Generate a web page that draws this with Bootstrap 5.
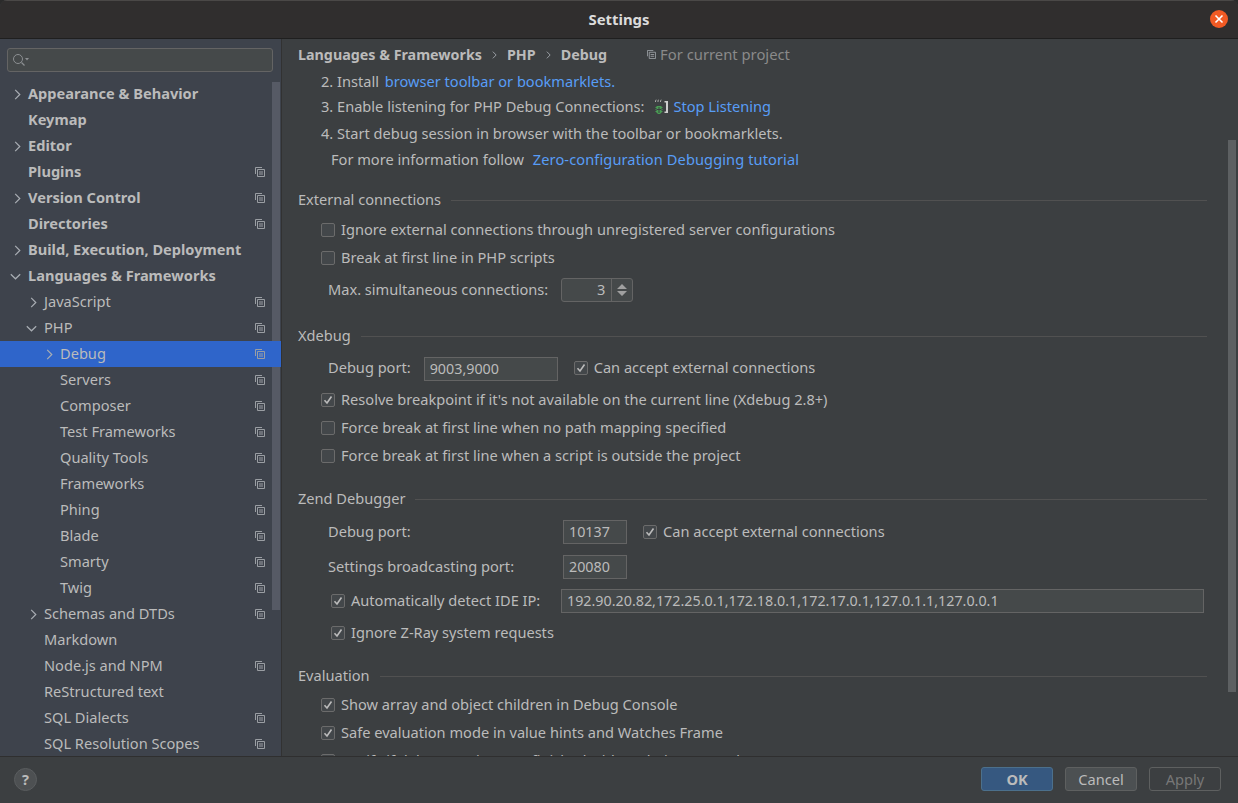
<!DOCTYPE html>
<html lang="en"><head><meta charset="utf-8"><title>Settings</title>
<link href="https://cdn.jsdelivr.net/npm/bootstrap@5.3.0/dist/css/bootstrap.min.css" rel="stylesheet">
<style>
html,body{height:100%}
body{background:#2b2b2b;font-family:"Noto Sans","Liberation Sans",sans-serif;font-size:14.6px;color:#bbb;overflow:hidden}
.dlg{height:803px;width:1238px;background:#3c3f41;border-radius:7px 7px 0 0;overflow:hidden;position:relative}
.titlebar{height:39px;background:#302e2e;border-top:1px solid #4a4847;border-bottom:1px solid #1f1f1f;position:relative}
.titlebar b{font-size:14.9px;color:#dcdcdc;font-weight:700;padding-bottom:1px}
.closer{position:absolute;right:10px;top:9px;width:18px;height:18px;border-radius:50%;background:#f15a24;border:0;padding:0}
.main{height:717px;overflow:hidden}
.side{width:282px;background:#3e434c;border-right:1px solid #323232;position:relative;flex:none}
.searchbox{margin:9px 8px 9px 7px;height:24px;background:#45494a;border:1px solid #646464;border-radius:3px;padding-left:4px}
.treelist{border-radius:0;--bs-list-group-bg:transparent;--bs-list-group-border-width:0}
.treelist .list-group-item{height:26px;padding:0 16px 0 0;color:#bbb;background:transparent;font-size:14.6px;white-space:nowrap;display:flex;align-items:center}
.treelist .list-group-item.active{background:#2f65ca;color:#bbb}
.lv0{font-weight:700}
.arrow{width:28px;flex:none;display:flex;justify-content:flex-end;padding-right:7px}
.lv1 .arrow{width:44px}
.lv2 .arrow{width:60px}
.sb1{position:absolute;left:272px;top:43px;width:8px;height:528px;background:rgba(120,125,135,.42)}
.sb2{position:absolute;right:2px;top:140px;width:8px;height:552px;background:#5d6062}
.content{flex:1;min-width:0;padding-left:16px;padding-right:31px;overflow:hidden}
.crumbs{height:31px;white-space:nowrap}
.crumbs b{font-weight:700;font-size:14.3px}
.crumbs .sep{margin:0 10px}
.scope{color:#8a8a8a;margin-left:40px;font-size:14.8px}
.ln{height:24px;display:flex;align-items:center;white-space:nowrap}
.ind1{padding-left:23px}.ind2{padding-left:30px}.ind3{padding-left:33px}
.lnk{color:#589df6;text-decoration:none}
.lnk-a{margin-left:2px}
.lnk-b{margin-left:5px;letter-spacing:.1px}
.ttl{display:flex;align-items:center;gap:10px}
.ttl::after{content:"";flex:1;height:1px;background:#515151}
.form-check-input.tick{width:14px;height:14px;margin:0 6px 0 0;background-color:#43474a;border:1px solid #6b6b6b;border-radius:2px;flex:none;float:none}
.form-check-input.tick.ms-3{margin-left:16px}
.form-check-input.tick:checked{background-color:#43474a;border-color:#6b6b6b;background-size:12px;background-image:url("data:image/svg+xml,%3csvg xmlns='http://www.w3.org/2000/svg' viewBox='0 0 12 12'%3e%3cpath fill='none' stroke='%23bbb' stroke-width='1.6' d='M2.5 6.3 5 9l4.5-6.5'/%3e%3c/svg%3e")}
.form-control.fld{height:24px;padding:0 5px 2px;background:#45494a;border:1px solid #646464;border-radius:0;color:#bbb;font-size:14.3px}
.spin{width:72px;height:24px;border:1px solid #646464;border-radius:3px;background:#45494a;margin-left:13px}
.spin span{flex:1;text-align:right;padding:0 6px 2px 0;border-right:1px solid #646464;line-height:20px}
.g1{margin-top:1px}.g2{margin-top:2px}.g3{margin-top:3px}.g4{margin-top:4px}.g5{margin-top:5px}.g6{margin-top:6px}.g8{margin-top:8px}.g9{margin-top:9px}.g10{margin-top:10px}.g11{margin-top:11px}.g16{margin-top:16px}.g19{margin-top:19px}.g22{margin-top:22px}
.footbar{height:47px;border-top:1px solid #2f2f2f;background:#3c3f41;padding:0 17px 2px 14px}
.helpbtn{width:23px;height:23px;border-radius:50%;background:#4d5052;border:1px solid #5a5d5f;color:#bbb;font-weight:700;font-size:14.6px;padding:0;line-height:20px}
.btn.dbtn{width:72px;height:24px;padding:0;font-size:14.6px;border-radius:3px;line-height:21px;color:#bbb;background:#4c5052;border:1px solid #5e6060}
.btn.dbtn.pri{background:#365880;border-color:#4c708c;font-weight:700}
.btn.dbtn.off{background:transparent;border-color:#5e6060;color:#777;opacity:1}
.port1{width:134px;flex:none;margin-left:13px}
.form-control.fld.port1{margin-top:2px}
.port2{width:64px;flex:none}
.lab1{width:235px;flex:none}
.lab2{width:230px;flex:none}
.ipf{margin-right:3px}
.for-more{margin-left:10px}
.bugi{margin:0 4px 0 10px;flex:none}
</style></head>
<body>
<svg width="0" height="0" class="d-block position-absolute"><defs>
<symbol id="proj" viewBox="0 0 10 10"><path fill="none" stroke="#9a9ea3" d="M.5 7V.5H7M2.5 2.5h7v7h-7zM4 5h4M4 7h4"/></symbol>
<symbol id="arr" viewBox="0 0 7 11"><path fill="none" stroke="#a8adb3" stroke-width="1.2" d="M1.2.8 5.8 5.5 1.2 10.2"/></symbol>
<symbol id="arrd" viewBox="0 0 11 7"><path fill="none" stroke="#a8adb3" stroke-width="1.2" d="M.8 1.2 5.5 5.8l4.7-4.6"/></symbol>
</defs></svg>
<div class="dlg d-flex flex-column">
 <div class="titlebar d-flex align-items-center justify-content-center"><b>Settings</b>
  <button class="closer d-flex align-items-center justify-content-center" aria-label="Close"><svg width="10" height="10" viewBox="0 0 10 10"><path stroke="#fff" stroke-width="1.6" d="m1.5 1.5 7 7m0-7-7 7"/></svg></button></div>
 <div class="main d-flex">
  <div class="side">
   <div class="searchbox d-flex align-items-center"><svg width="18" height="14" viewBox="0 0 18 14"><circle cx="6" cy="6" r="4.5" fill="none" stroke="#8c8f92"/><path stroke="#8c8f92" stroke-width="1.2" d="m9.5 9.5 3 3"/><path fill="#8c8f92" d="M13 5h4l-2 2.500z"/></svg></div>
   <div class="list-group treelist" id="tree"></div>
   <div class="sb1"></div>
  </div>
  <div class="content">
   <div class="crumbs d-flex align-items-center"><b>Languages &amp; Frameworks</b><svg class="sep" width="5" height="8"><use href="#arr"/></svg><b>PHP</b><svg class="sep" width="5" height="8"><use href="#arr"/></svg><b>Debug</b><span class="scope d-flex align-items-center gap-1"><svg width="9" height="9"><use href="#proj"/></svg>For current project</span></div>
   <div class="ln ind1">2. Install&nbsp; <a class="lnk lnk-a" href="#">browser toolbar or bookmarklets.</a></div>
   <div class="ln ind1 g1">3. Enable listening for PHP Debug Connections:<svg class="bugi" width="15" height="16" viewBox="0 0 15 16"><path fill="none" stroke="#a9a9a9" d="M1.5 3V1.500Q1.500 1 2.500 1M4 3V1.500Q4 1 5 1M6.500 3V1.500Q6.500 1 7.500 1"/><path fill="#ccc" d="M10.500 2H14v12h-3.500v-1.500H12v-9h-1.500z"/><path fill="#499c54" d="M2.500 7h5v1h1v1h-1v1h1v1h-1v1h1v1h-1v1h-1v1h-3v-1h-1v-1h-1v-1h1v-1h-1v-1h1V9h-1V8h1z"/><path stroke="#3c3f41" d="M2.500 10.500h5M5 8v6"/></svg><a class="lnk" href="#">Stop Listening</a></div>
   <div class="ln ind1 g3">4. Start debug session in browser with the toolbar or bookmarklets.</div>
   <div class="ln ind1 g2"><span class="for-more">For more information follow</span>&nbsp; <a class="lnk lnk-b" href="#">Zero-configuration Debugging tutorial</a></div>

   <div class="ln ttl g16">External connections</div>
   <div class="ln ind1 g6"><input class="form-check-input tick" type="checkbox">Ignore external connections through unregistered server configurations</div>
   <div class="ln ind1 g4"><input class="form-check-input tick" type="checkbox">Break at first line in PHP scripts</div>
   <div class="ln ind2 g8">Max. simultaneous connections:<div class="spin d-flex align-items-center"><span>3</span><svg class="mx-1" width="12" height="14" viewBox="0 0 12 14"><path fill="#a0a0a0" d="M6 1l5 5H1zM6 13l5-5H1z"/></svg></div></div>

   <div class="ln ttl g22">Xdebug</div>
   <div class="ln ind2 g8">Debug port:<input class="form-control fld port1" value="9003,9000"><input class="form-check-input tick ms-3" type="checkbox" checked>Can accept external connections</div>
   <div class="ln ind1 g8"><input class="form-check-input tick" type="checkbox" checked>Resolve breakpoint if it's not available on the current line (Xdebug 2.8+)</div>
   <div class="ln ind1 g4"><input class="form-check-input tick" type="checkbox">Force break at first line when no path mapping specified</div>
   <div class="ln ind1 g4"><input class="form-check-input tick" type="checkbox">Force break at first line when a script is outside the project</div>

   <div class="ln ttl g19">Zend Debugger</div>
   <div class="ln ind2 g9"><span class="lab1">Debug port:</span><input class="form-control fld port2" value="10137"><input class="form-check-input tick ms-3" type="checkbox" checked>Can accept external connections</div>
   <div class="ln ind2 g11"><span class="lab1">Settings broadcasting port:</span><input class="form-control fld port2" value="20080"></div>
   <div class="ln ind3 g10"><span class="lab2 d-flex align-items-center"><input class="form-check-input tick" type="checkbox" checked>Automatically detect IDE IP:</span><input class="form-control fld flex-fill ipf" value="192.90.20.82,172.25.0.1,172.18.0.1,172.17.0.1,127.0.1.1,127.0.0.1"></div>
   <div class="ln ind3 g8"><input class="form-check-input tick" type="checkbox" checked>Ignore Z-Ray system requests</div>

   <div class="ln ttl g19">Evaluation</div>
   <div class="ln ind1 g5"><input class="form-check-input tick" type="checkbox" checked>Show array and object children in Debug Console</div>
   <div class="ln ind1 g4"><input class="form-check-input tick" type="checkbox" checked>Safe evaluation mode in value hints and Watches Frame</div>
   <div class="ln ind1 g4"><input class="form-check-input tick" type="checkbox">Notify if debug session was finished without being paused</div>
  </div>
 </div>
 <div class="footbar d-flex align-items-center">
  <button class="helpbtn">?</button>
  <div class="ms-auto d-flex gap-2"><button class="btn dbtn pri">OK</button><button class="btn dbtn mx-1">Cancel</button><button class="btn dbtn off" disabled>Apply</button></div>
 </div>
 <div class="sb2"></div>
</div>
<script>
var t=[["Appearance & Behavior",0,"r",0],["Keymap",0,"",0],["Editor",0,"r",0],["Plugins",0,"",1],["Version Control",0,"r",1],["Directories",0,"",1],["Build, Execution, Deployment",0,"r",0],["Languages & Frameworks",0,"d",0],["JavaScript",1,"r",1],["PHP",1,"d",1],["Debug",2,"r",1,1],["Servers",2,"",1],["Composer",2,"",1],["Test Frameworks",2,"",1],["Quality Tools",2,"",1],["Frameworks",2,"",1],["Phing",2,"",1],["Blade",2,"",1],["Smarty",2,"",1],["Twig",2,"",1],["Schemas and DTDs",1,"r",1],["Markdown",1,"",0],["Node.js and NPM",1,"",1],["ReStructured text",1,"",0],["SQL Dialects",1,"",1],["SQL Resolution Scopes",1,"",1]];
var h="";t.forEach(function(r){var a=r[2]=="r"?'<svg width="7" height="11"><use href="#arr"/></svg>':r[2]=="d"?'<svg width="11" height="7"><use href="#arrd"/></svg>':'';
h+='<div class="list-group-item lv'+r[1]+(r[4]?' active':'')+'"><span class="arrow">'+a+'</span><span class="flex-fill">'+r[0].replace("&","&amp;")+'</span>'+(r[3]?'<svg width="10" height="10"><use href="#proj"/></svg>':'')+'</div>';});
document.getElementById("tree").innerHTML=h;
</script>
</body></html>
